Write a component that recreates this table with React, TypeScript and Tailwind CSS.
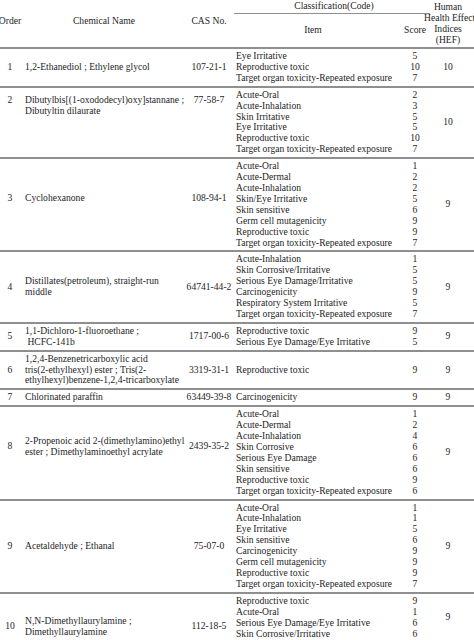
import { FC } from "react";

type Item = { name: string; score: string };
type Row = {
  order: string;
  chem: string[];
  cas: string;
  items: Item[];
  hef: string;
  // padding / alignment for the order, name and CAS cells
  pos?: string;
};

const rows: Row[] = [
  {
    order: "1",
    chem: ["1,2-Ethanediol ; Ethylene glycol"],
    cas: "107-21-1",
    items: [
      { name: "Eye Irritative", score: "5" },
      { name: "Reproductive toxic", score: "10" },
      { name: "Target organ toxicity-Repeated exposure", score: "7" },
    ],
    hef: "10",
  },
  {
    order: "2",
    chem: ["Dibutylbis[(1-oxododecyl)oxy]stannane ;", "Dibutyltin dilaurate"],
    cas: "77-58-7",
    items: [
      { name: "Acute-Oral", score: "2" },
      { name: "Acute-Inhalation", score: "3" },
      { name: "Skin Irritative", score: "5" },
      { name: "Eye Irritative", score: "5" },
      { name: "Reproductive toxic", score: "10" },
      { name: "Target organ toxicity-Repeated exposure", score: "7" },
    ],
    hef: "10",
    pos: "align-top pt-[7px] pb-[2px]",
  },
  {
    order: "3",
    chem: ["Cyclohexanone"],
    cas: "108-94-1",
    items: [
      { name: "Acute-Oral", score: "1" },
      { name: "Acute-Dermal", score: "2" },
      { name: "Acute-Inhalation", score: "2" },
      { name: "Skin/Eye Irritative", score: "5" },
      { name: "Skin sensitive", score: "6" },
      { name: "Germ cell mutagenicity", score: "9" },
      { name: "Reproductive toxic", score: "9" },
      { name: "Target organ toxicity-Repeated exposure", score: "7" },
    ],
    hef: "9",
    pos: "align-middle pt-[2px] pb-[14px]",
  },
  {
    order: "4",
    chem: ["Distillates(petroleum), straight-run", "middle"],
    cas: "64741-44-2",
    items: [
      { name: "Acute-Inhalation", score: "1" },
      { name: "Skin Corrosive/Irritative", score: "5" },
      { name: "Serious Eye Damage/Irritative", score: "5" },
      { name: "Carcinogenicity", score: "9" },
      { name: "Respiratory System Irritative", score: "5" },
      { name: "Target organ toxicity-Repeated exposure", score: "7" },
    ],
    hef: "9",
  },
  {
    order: "5",
    chem: ["1,1-Dichloro-1-fluoroethane ;", "\u00a0HCFC-141b"],
    cas: "1717-00-6",
    items: [
      { name: "Reproductive toxic", score: "9" },
      { name: "Serious Eye Damage/Eye Irritative", score: "5" },
    ],
    hef: "9",
  },
  {
    order: "6",
    chem: [
      "1,2,4-Benzenetricarboxylic acid",
      "tris(2-ethylhexyl) ester ; Tris(2-",
      "ethylhexyl)benzene-1,2,4-tricarboxylate",
    ],
    cas: "3319-31-1",
    items: [{ name: "Reproductive toxic", score: "9" }],
    hef: "9",
  },
  {
    order: "7",
    chem: ["Chlorinated paraffin"],
    cas: "63449-39-8",
    items: [{ name: "Carcinogenicity", score: "9" }],
    hef: "9",
  },
  {
    order: "8",
    chem: ["2-Propenoic acid 2-(dimethylamino)ethyl", "ester ; Dimethylaminoethyl acrylate"],
    cas: "2439-35-2",
    items: [
      { name: "Acute-Oral", score: "1" },
      { name: "Acute-Dermal", score: "2" },
      { name: "Acute-Inhalation", score: "4" },
      { name: "Skin Corrosive", score: "6" },
      { name: "Serious Eye Damage", score: "6" },
      { name: "Skin sensitive", score: "6" },
      { name: "Reproductive toxic", score: "9" },
      { name: "Target organ toxicity-Repeated exposure", score: "6" },
    ],
    hef: "9",
    pos: "align-middle pt-[2px] pb-[14px]",
  },
  {
    order: "9",
    chem: ["Acetaldehyde ; Ethanal"],
    cas: "75-07-0",
    items: [
      { name: "Acute-Oral", score: "1" },
      { name: "Acute-Inhalation", score: "1" },
      { name: "Eye Irritative", score: "5" },
      { name: "Skin sensitive", score: "6" },
      { name: "Carcinogenicity", score: "9" },
      { name: "Germ cell mutagenicity", score: "9" },
      { name: "Reproductive toxic", score: "9" },
      { name: "Target organ toxicity-Repeated exposure", score: "7" },
    ],
    hef: "9",
  },
  {
    order: "10",
    chem: ["N,N-Dimethyllaurylamine ;", "Dimethyllaurylamine"],
    cas: "112-18-5",
    items: [
      { name: "Reproductive toxic", score: "9" },
      { name: "Acute-Oral", score: "1" },
      { name: "Serious Eye Damage/Eye Irritative", score: "6" },
      { name: "Skin Corrosive/Irritative", score: "6" },
    ],
    hef: "9",
    pos: "align-middle pt-[20px] pb-[2px]",
  },
];

const headCls = "font-normal text-center border-b-2 border-[#8f8f8f]";

const App: FC = () => {
  return (
    <div className="w-[474px] h-[640px] overflow-hidden bg-white">
      <table
        className="ml-[-4px] w-[489px] table-fixed border-collapse text-[9.6px] leading-[10.9px] text-[#1e1e1e]"
        style={{ fontFamily: '"Liberation Serif", "Times New Roman", serif' }}
      >
        <colgroup>
          <col className="w-[28px]" />
          <col className="w-[160px]" />
          <col className="w-[50px]" />
          <col className="w-[166px]" />
          <col className="w-[30px]" />
          <col className="w-[55px]" />
        </colgroup>
        <thead>
          <tr>
            <th rowSpan={2} className={`${headCls} align-middle pb-[4px]`}>
              Order
            </th>
            <th rowSpan={2} className={`${headCls} align-middle pb-[4px]`}>
              Chemical Name
            </th>
            <th rowSpan={2} className={`${headCls} align-middle pb-[4px]`}>
              CAS No.
            </th>
            <th colSpan={2} className="font-normal text-center h-[12px] align-top border-b border-[#8f8f8f] pl-[4px] pt-[1px]">
              Classification(Code)
            </th>
            <th rowSpan={2} className={`${headCls} align-top pt-[1px] pb-[2px] pr-[19px] whitespace-nowrap leading-[11px]`}>
              Human
              <br />
              <span className="inline-block ml-[-6px]">Health Effect</span>
              <br />
              Indices
              <br />
              (HEF)
            </th>
          </tr>
          <tr>
            <th className={`${headCls} align-middle h-[32px] pr-[8px]`}>Item</th>
            <th className={`${headCls} align-middle`}>Score</th>
          </tr>
        </thead>
        <tbody>
          {rows.map((row) => {
            const pos = row.pos ?? "align-middle pt-[2px] pb-[2px]";
            return (
              <tr key={row.order} className="border-b-2 border-[#8f8f8f]">
                <td className={`text-center ${pos}`}>{row.order}</td>
                <td className={`pl-[1px] whitespace-nowrap ${pos}`}>
                  {row.chem.map((line, idx) => (
                    <div key={idx}>{line}</div>
                  ))}
                </td>
                <td className={`text-center whitespace-nowrap ${pos}`}>{row.cas}</td>
                <td className="align-middle pl-[2px] pt-[2px] pb-[2px] whitespace-nowrap">
                  {row.items.map((item, idx) => (
                    <div key={idx}>{item.name}</div>
                  ))}
                </td>
                <td className="text-center align-middle pt-[2px] pb-[2px]">
                  {row.items.map((item, idx) => (
                    <div key={idx}>{item.score}</div>
                  ))}
                </td>
                <td className="text-center align-middle pt-[2px] pb-[2px] pr-[19px]">{row.hef}</td>
              </tr>
            );
          })}
        </tbody>
      </table>
    </div>
  );
};

export default App;
